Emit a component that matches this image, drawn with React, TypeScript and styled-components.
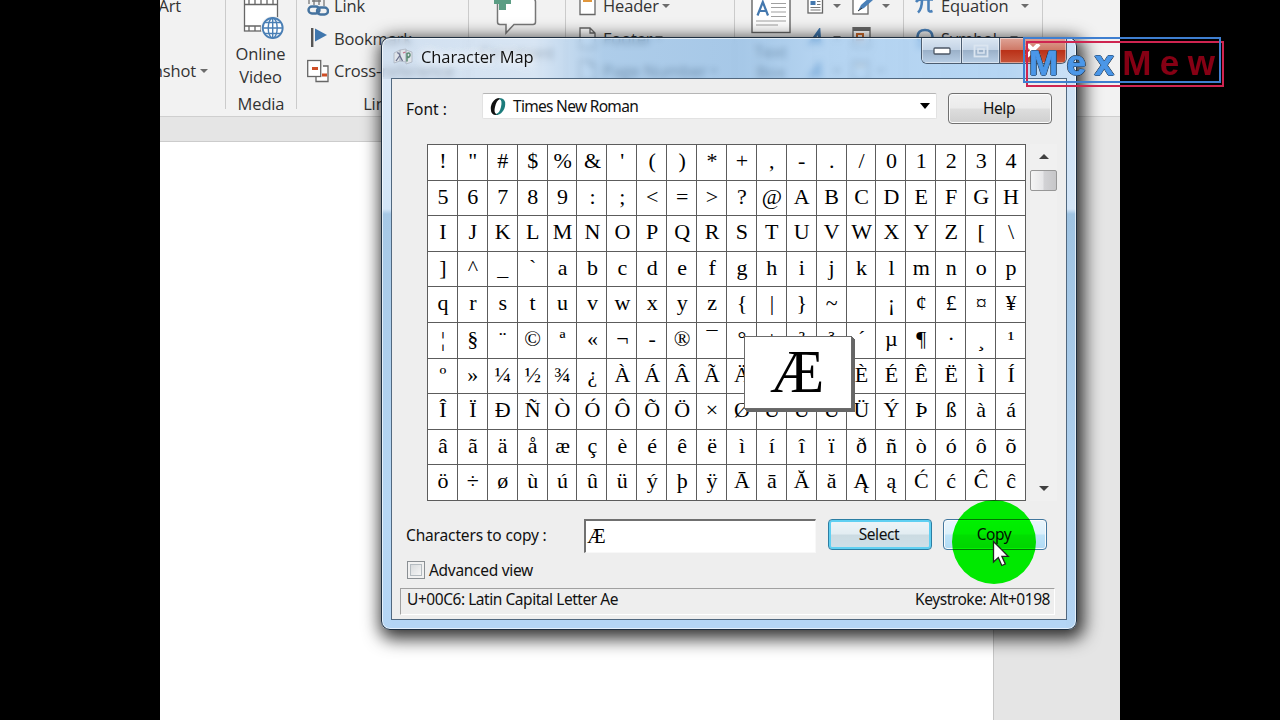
import React from 'react';
import styled, { createGlobalStyle } from 'styled-components';

const Global = createGlobalStyle`
  * { box-sizing: border-box; }
  body { margin: 0; background: #000; overflow: hidden; }
`;

const uiFont = '"Noto Sans", "Open Sans", sans-serif';

const Screen = styled.div`
  position: relative;
  width: 1280px;
  height: 720px;
  padding: 0 160px;
  background: #000;
  overflow: hidden;
`;

const Word = styled.div`
  display: flex;
  flex-direction: column;
  height: 720px;
  background: #e5e5e5;
  font-family: "Open Sans", "Noto Sans", sans-serif;
  font-size: 16.5px;
  letter-spacing: -0.15px;
  color: #333;
  overflow: hidden;
`;

const Ribbon = styled.div`
  display: flex;
  flex: none;
  height: 117px;
  background: #f2f2f2;
  border-bottom: 1px solid #cfcfcf;
`;

const Group = styled.div<{ $w: number }>`
  display: flex;
  flex: none;
  flex-direction: column;
  width: ${(p) => p.$w}px;
  height: 109px;
  border-right: 1px solid #cbcbcb;
`;

const GroupBody = styled.div`
  display: flex;
  height: 93px;
`;

const GroupName = styled.div`
  height: 16px;
  line-height: 22px;
  text-align: center;
  white-space: nowrap;
`;

const Rows = styled.div<{ $pad?: number; $end?: boolean }>`
  display: flex;
  flex-direction: column;
  margin-top: -10.5px;
  padding-left: ${(p) => p.$pad ?? 0}px;
  ${(p) => (p.$end ? 'align-items: flex-end; width: 48px; flex: none;' : '')}
`;

const Row = styled.div<{ $gap?: number; $endPad?: number }>`
  display: flex;
  flex: none;
  align-items: center;
  gap: ${(p) => p.$gap ?? 5}px;
  height: 32.5px;
  padding-right: ${(p) => p.$endPad ?? 0}px;
  white-space: nowrap;
  svg { flex: none; display: block; }
`;

const BigButton = styled.div<{ $w: number; $line?: number }>`
  display: flex;
  flex: none;
  flex-direction: column;
  align-items: center;
  width: ${(p) => p.$w}px;
  line-height: ${(p) => p.$line ?? 23}px;
  svg { flex: none; display: block; margin-bottom: -1px; }
`;

const Caret = styled.span<{ $ml?: number }>`
  width: 0;
  height: 0;
  margin-left: ${(p) => p.$ml ?? 0}px;
  border: 4px solid transparent;
  border-top-color: #6c6c6c;
  border-bottom-width: 0;
`;

const Paper = styled.div`
  flex: none;
  width: 834px;
  height: 579px;
  margin-top: 24px;
  background: #fff;
  border-top: 1px solid #cccccc;
  border-right: 1px solid #c6c6c6;
`;

const Window = styled.div`
  position: absolute;
  left: 381px;
  top: 37px;
  display: flex;
  flex-direction: column;
  width: 696px;
  height: 593px;
  padding: 0 9px 9px;
  border: 1px solid #1f2f40;
  border-radius: 9px;
  background:
    linear-gradient(180deg, #dbe8f6 0, #d3e5f7 130px, #a6c8e6 135px, #b7d7f4 430px, #b4d5f5 100%) left 41px / 10px 100% no-repeat,
    linear-gradient(180deg, #cfe2f5 0, #d3e5f7 130px, #9fc3e2 135px, #b0d1ef 430px, #b4d5f5 100%) right 41px / 10px 100% no-repeat,
    linear-gradient(90deg, #b4d5f5 0, #b4d5f5 100%) left bottom / 100% 10px no-repeat,
    linear-gradient(90deg, rgba(196,216,238,.72) 0, rgba(204,223,243,.72) 22%, rgba(145,189,230,.7) 32%, rgba(134,182,227,.7) 52%, rgba(156,199,239,.72) 63%, rgba(162,204,243,.76) 90%, rgba(200,223,246,.9) 100%);
  backdrop-filter: blur(3px);
  box-shadow: inset 0 0 0 1px rgba(255,255,255,.65), 3px 5px 17px 4px rgba(0,0,0,.8);
`;

const TitleBar = styled.div`
  display: flex;
  flex: none;
  align-items: flex-start;
  height: 40px;
  padding-left: 2px;
`;

const TitleIcon = styled.div`
  margin: 10px 8px 0 0;
  svg { display: block; }
`;

const Title = styled.div`
  flex: 1;
  margin-top: 7px;
  font: 16.5px/24px "Open Sans", "Noto Sans", sans-serif;
  letter-spacing: -0.1px;
  color: #111;
  text-shadow: 0 0 8px #fff, 0 0 8px #fff;
`;

const Controls = styled.div`
  display: flex;
  width: 146px;
  height: 26px;
  border: 1px solid #4b5c70;
  border-top: 0;
  border-radius: 0 0 6px 6px;
  overflow: hidden;
`;

const Control = styled.div<{ $w: number; $close?: boolean }>`
  display: flex;
  flex: none;
  justify-content: center;
  align-items: center;
  width: ${(p) => p.$w}px;
  border-right: ${(p) => (p.$close ? '0' : '1px solid #4b5c70')};
  box-shadow: inset 0 0 0 1px rgba(255,255,255,.45);
  background: ${(p) =>
    p.$close
      ? 'linear-gradient(180deg, #dfa497 0, #cf7a68 46%, #ba3118 50%, #c7553a 100%)'
      : 'linear-gradient(180deg, #dbe6f2 0, #c4d4e6 46%, #9bb1c9 50%, #b8cee5 100%)'};
`;

const Client = styled.div`
  display: flex;
  flex: none;
  flex-direction: column;
  width: 676px;
  height: 542px;
  padding: 14px 0 0 14px;
  border: 1px solid #51687f;
  background: #eeeeee;
  font-family: ${uiFont};
  font-size: 15.5px;
  letter-spacing: -0.4px;
  color: #111;
`;

const FontRow = styled.div`
  display: flex;
  height: 51px;
`;

const FieldLabel = styled.div<{ $w: number; $ls?: number }>`
  flex: none;
  width: ${(p) => p.$w}px;
  line-height: 32px;
  letter-spacing: ${(p) => p.$ls ?? 0}px;
  white-space: nowrap;
`;

const Combo = styled.div`
  display: flex;
  align-items: center;
  width: 455px;
  height: 26px;
  margin-right: 11px;
  padding: 0 6px 0 7px;
  background: #fff;
  border: 1px solid #e2e2e2;
  border-top-color: #b5b5b5;
  border-radius: 2px;
`;

const ComboText = styled.div`
  flex: 1;
  margin-left: 7px;
  letter-spacing: -0.7px;
`;

const DropArrow = styled.span`
  border: 5.5px solid transparent;
  border-top: 6px solid #000;
  border-bottom-width: 0;
`;

const Button = styled.div<{ $kind?: 'default' | 'hover' }>`
  display: flex;
  flex: none;
  justify-content: center;
  align-items: center;
  width: 104px;
  height: 31px;
  padding: 0 2px 1px 0;
  border-radius: 4px;
  border: 1px solid ${(p) => (p.$kind === 'default' ? '#2c7ea3' : p.$kind === 'hover' ? '#42779e' : '#707070')};
  box-shadow: inset 0 0 0 ${(p) => (p.$kind === 'default' ? '2px #5fd0f2' : '1px #fbfbfb')};
  background: ${(p) =>
    p.$kind === 'default'
      ? 'linear-gradient(180deg, #eef5f8 0, #e2edf2 48%, #cbdbe2 52%, #cfe0e8 100%)'
      : p.$kind === 'hover'
      ? 'linear-gradient(180deg, #e9f5fc 0, #dcf0fb 48%, #bee3f8 52%, #b0daf4 100%)'
      : 'linear-gradient(180deg, #f2f2f2 0, #ebebeb 48%, #dddddd 52%, #cfcfcf 100%)'};
`;

const GridRow = styled.div`
  display: flex;
  flex: none;
  height: 375px;
  padding-left: 21px;
`;

const CharGrid = styled.div`
  display: grid;
  flex: none;
  grid-template-columns: repeat(20, 1fr);
  grid-template-rows: repeat(10, 1fr);
  width: 599px;
  height: 357px;
  border-left: 1px solid #5c5c5c;
  border-top: 1px solid #5c5c5c;
  background: #fff;
  font: 22px/32px "Liberation Serif", serif;
  letter-spacing: 0;
  color: #000;
`;

const Cell = styled.div`
  display: flex;
  justify-content: center;
  min-width: 0;
  min-height: 0;
  padding-left: 1px;
  border-right: 1px solid #5c5c5c;
  border-bottom: 1px solid #5c5c5c;
`;

const Scroll = styled.div`
  display: flex;
  flex-direction: column;
  align-items: center;
  width: 27px;
  height: 357px;
  margin-left: 4px;
  padding: 10px 0 10px;
  background: #f0f0f0;
`;

const ScrollArrow = styled.span<{ $down?: boolean }>`
  border: 5px solid transparent;
  ${(p) =>
    p.$down
      ? 'border-top-color: #404040; border-bottom-width: 0; margin-top: auto;'
      : 'border-bottom-color: #404040; border-top-width: 0;'}
`;

const Thumb = styled.div`
  width: 27px;
  height: 21px;
  margin-top: 11px;
  border: 1px solid #979797;
  border-radius: 2px;
  background: linear-gradient(90deg, #f5f5f5 0, #e6e6e8 48%, #d2d2d5 52%, #c6c6c8 100%);
`;

const CopyRow = styled.div`
  display: flex;
  flex: none;
  height: 42px;
`;

const ButtonPair = styled.div`
  display: flex;
  gap: 11px;
`;

const CopyField = styled.div`
  flex: none;
  width: 232px;
  height: 34px;
  margin-right: 12px;
  padding-left: 1px;
  border: 2px solid #707070;
  border-right: 1px solid #f8f8f8;
  border-bottom: 1px solid #f8f8f8;
  background: #fff;
  font: 21px/30px "Liberation Serif", serif;
  color: #000;
`;

const CheckRow = styled.div`
  display: flex;
  flex: none;
  align-items: center;
  gap: 4px;
  height: 18px;
  margin-bottom: 9px;
  letter-spacing: -0.3px;
`;

const CheckBox = styled.div`
  width: 18px;
  height: 18px;
  margin-left: 1px;
  border: 1px solid #8a8f93;
  box-shadow: inset 0 0 0 2px #f1f1f1, inset 0 0 0 3px #b4bbc0;
  background: linear-gradient(135deg, #cfd3d6, #f5f5f5 80%);
`;

const StatusBar = styled.div`
  display: flex;
  flex: none;
  justify-content: space-between;
  width: 655px;
  height: 27px;
  margin-left: -6px;
  padding: 0 4px 0 6px;
  border: 1px solid #a0a0a0;
  border-right-color: #fff;
  border-bottom-color: #fff;
  line-height: 21px;
  letter-spacing: -0.45px;
  white-space: nowrap;
`;

const Preview = styled.div`
  position: absolute;
  left: 744px;
  top: 336px;
  width: 108px;
  height: 73px;
  border: 1px solid #6b6b6b;
  background: #fff;
  box-shadow: 1px 1px 0 #666, 2px 2px 0 #666, 3px 3px 0 #666;
  font: 61px/69px "Liberation Serif", serif;
  color: #000;
  text-align: center;
  text-indent: -2px;
`;

const ClickHalo = styled.div`
  position: absolute;
  left: 952px;
  top: 500px;
  width: 84px;
  height: 84px;
  border-radius: 50%;
  background: #00fa00;
  mix-blend-mode: multiply;
`;

const Pointer = styled.svg`
  position: absolute;
  left: 992px;
  top: 540px;
`;

const MarkFrame = styled.div<{ $x: number; $y: number; $c: string }>`
  position: absolute;
  left: ${(p) => p.$x}px;
  top: ${(p) => p.$y}px;
  width: 198px;
  height: 46px;
  border: 2px solid ${(p) => p.$c};
`;

const Mark = styled.div`
  position: absolute;
  left: 1029px;
  top: 42px;
  font: bold 35px/42px "Liberation Sans", sans-serif;
  letter-spacing: 8.4px;
  white-space: nowrap;
`;

const MarkBlue = styled.span`
  color: #4b97e8;
  -webkit-text-stroke: 0.8px #4b97e8;
  text-shadow: 1px 0 #22303f, -1px 0 #22303f, 0 1px #22303f, 0 -1px #22303f;
`;

const MarkRed = styled.span`
  color: #860014;
`;

const Film = () => (
  <svg width="72" height="43" viewBox="225 0 72 43" fill="none">
    <rect x="244.500" y="-4" width="33" height="35" fill="#fff" stroke="#666" strokeWidth="1.3" />
    <path d="M244.500 4.500h33M244.500 26h33M249 0v4M255 0v4M261 0v4M267 0v4M273 0v4M249 26v5M255 26v5M261 26v5" stroke="#666" strokeWidth="1.3" />
    <circle cx="272.700" cy="28" r="12" fill="#f2f2f2" />
    <circle cx="272.700" cy="28" r="10" fill="#fff" stroke="#4a7fb5" strokeWidth="1.8" />
    <ellipse cx="272.700" cy="28" rx="4.500" ry="10" stroke="#4a7fb5" strokeWidth="1.4" />
    <path d="M262.700 28h20M272.700 18v20M264.500 22.500h16.400M264.500 33.500h16.400" stroke="#4a7fb5" strokeWidth="1.4" />
  </svg>
);

const LinkIcon = () => (
  <svg width="22" height="24" viewBox="0 0 22 24" fill="none">
    <path d="M2 4v6M17 4v8M5 7h9M7 4v7M12 4v7" stroke="#777" strokeWidth="1.3" />
    <rect x="1.500" y="12.500" width="11" height="7" rx="3.500" stroke="#45739f" strokeWidth="2.400" />
    <rect x="10" y="13.500" width="11" height="7" rx="3.500" stroke="#45739f" strokeWidth="2.400" />
  </svg>
);

const Flag = () => (
  <svg width="22" height="22" viewBox="0 0 22 22">
    <rect x="4" y="1" width="2.400" height="19" fill="#555" />
    <path d="M8 1.500L20 8L8 14.500z" fill="#3f76ad" />
  </svg>
);

const CrossRef = () => (
  <svg width="22" height="24" viewBox="0 0 22 24" fill="none">
    <path d="M9 16v6.500h12V7h-5" fill="#fff" stroke="#666" strokeWidth="1.300" />
    <rect x=".7" y="1.500" width="13" height="16" fill="#fff" stroke="#666" strokeWidth="1.300" />
    <path d="M5 9.500h6M15 16h5" stroke="#cf4f27" strokeWidth="3" />
  </svg>
);

const Bubble = () => (
  <svg width="97" height="42" viewBox="469 0 97 42" fill="none">
    <path d="M497.500 -5V22q0 2.500 2.500 2.500h6v8.500l8-8.500h19q2.500 0 2.500-2.500V2q0-3-2.500-3z" fill="#fff" stroke="#777" strokeWidth="1.500" />
    <path d="M494 0h17v4h-5v6h-7V4h-5z" fill="#5b9d84" />
  </svg>
);

const PageIcon = ({ fold }: { fold?: boolean }) => (
  <svg width="17" height="22" viewBox="0 0 17 22" fill="none">
    <path d={fold ? 'M1 1h10l5 5v15H1zM11 1v5h5' : 'M1 1h15v18.500H1z'} fill="#fff" stroke="#666" strokeWidth="1.300" />
    {!fold && <path d="M4 6h9" stroke="#e0963c" strokeWidth="2" />}
  </svg>
);

const TextBoxIcon = () => (
  <svg width="72" height="43" viewBox="735 0 72 43" fill="none">
    <rect x="752" y="-4" width="38" height="36.500" fill="#fff" stroke="#666" strokeWidth="1.400" />
    <path d="M757.500 15.500L762.800 2L768 15.500M759.500 11h6.800" stroke="#4478ae" strokeWidth="2.200" />
    <path d="M771 3.500h15M771 7.500h15M771 12h15M771 16.500h15M756 21h30M756 25h22" stroke="#a0a0a0" strokeWidth="1.200" />
  </svg>
);

const QuickParts = () => (
  <svg width="17" height="20" viewBox="0 0 17 20" fill="none">
    <rect x="1" y="0" width="14.500" height="17" fill="#fff" stroke="#666" strokeWidth="1.300" />
    <rect x="3.500" y="5" width="5" height="4" fill="#4478ae" />
    <path d="M10 5.500h3.500M10 8.500h3.500M3.500 11.500h10M3.500 14h10" stroke="#777" />
  </svg>
);

const WordArt = () => (
  <svg width="17" height="20" viewBox="0 0 17 20" fill="none">
    <path d="M2 17L12 3L13 17M5 13h8" stroke="#3f76ad" strokeWidth="3" />
  </svg>
);

const Signature = () => (
  <svg width="22" height="22" viewBox="0 0 22 22" fill="none">
    <rect x="1" y="2" width="15" height="17" fill="#fff" stroke="#666" strokeWidth="1.300" />
    <path d="M6 16L9 10L18 2L21 5L12 13z" fill="#4a80b8" />
    <path d="M6 16l4-3" stroke="#333" />
  </svg>
);

const DateIcon = () => (
  <svg width="22" height="22" viewBox="0 0 22 22" fill="none">
    <rect x="1" y="0" width="17" height="20" fill="#fff" stroke="#666" strokeWidth="1.300" />
    <rect x="1" y="0" width="17" height="4" fill="#666" />
    <rect x="5" y="7" width="6" height="6" stroke="#cf6a2c" strokeWidth="2" />
  </svg>
);

const Pi = () => (
  <svg width="20" height="20" viewBox="0 0 20 20" fill="none">
    <path d="M1 6Q3 3.500 6 3.500H18M7 3.500Q7 13 3 16.500M13.500 3.500V13.500Q13.500 16.500 17.500 15" stroke="#4a80b8" strokeWidth="2.600" />
  </svg>
);

const Omega = () => (
  <svg width="20" height="22" viewBox="0 0 20 22" fill="none">
    <path d="M2 19.500H7.500V17Q2.500 14 2.500 9.500Q3 3 10 3T17.500 9.500Q17.500 14 12.500 17V19.500H18" stroke="#4a80b8" strokeWidth="2.600" />
  </svg>
);

const MapIcon = () => (
  <svg width="20" height="18" viewBox="0 0 20 18" fill="none">
    <path d="M1 5L7 2V13L1 15zM13 2L19 4V14L13 16zM7 2L13 1V14L7 13z" fill="#dfe4ea" stroke="#a9b3bf" strokeWidth=".8" />
    <path d="M4 5Q6 4 7 8L9.500 13M6.500 8L3 13" stroke="#6a6f8c" strokeWidth="1.300" />
    <path d="M10 5l2.500-1" stroke="#c2708a" strokeWidth="1.300" />
    <path d="M14 5V13.500M14 5.500Q17.500 4 17 7.500Q16.500 9.500 14 9.500" stroke="#5a8a72" strokeWidth="1.500" />
  </svg>
);

const OpenType = () => (
  <svg width="16" height="19" viewBox="0 0 16 19">
    <path fillRule="evenodd" d="M9.500 1C4 1 .5 7 .8 12Q1 18 6 18Q9 18 8 17C4.500 17.500 4 14 5 10Q6.500 3 10 2z" fill="#111" />
    <path d="M9.500 1Q15.500 1 15.200 7.500C15 13 11 18 6 18L6.500 16.700Q9.500 16 11 10Q12.500 3 9.500 2.200z" fill="#1c7c7c" />
  </svg>
);

const glyphRows = [
  '!"#$%&\'()*+,-./01234',
  '56789:;<=>?@ABCDEFGH',
  'IJKLMNOPQRSTUVWXYZ[\\',
  ']^_`abcdefghijklmnop',
  'qrstuvwxyz{|}~\u00a0¡¢£¤¥',
  '¦§¨©ª«¬-®¯°±²³´µ¶·¸¹',
  'º»¼½¾¿ÀÁÂÃÄÅÆÇÈÉÊËÌÍ',
  'ÎÏÐÑÒÓÔÕÖ×ØÙÚÛÜÝÞßàá',
  'âãäåæçèéêëìíîïðñòóôõ',
  'ö÷øùúûüýþÿĀāĂăĄąĆćĈĉ',
];

export default function App() {
  return (
    <Screen>
      <Global />
      <Word>
        <Ribbon>
          <Group $w={66}>
            <GroupBody>
              <Rows $end>
                <Row $endPad={27}>SmartArt</Row>
                <Row />
                <Row $gap={4}>Screenshot<Caret /></Row>
              </Rows>
            </GroupBody>
          </Group>
          <Group $w={71}>
            <GroupBody>
              <BigButton $w={69}>
                <Film />
                <span>Online</span>
                <span>Video</span>
              </BigButton>
            </GroupBody>
            <GroupName>Media</GroupName>
          </Group>
          <Group $w={172}>
            <GroupBody>
              <Rows $pad={10}>
                <Row><LinkIcon />Link</Row>
                <Row><Flag />Bookmark</Row>
                <Row><CrossRef />Cross-reference</Row>
              </Rows>
            </GroupBody>
            <GroupName>Links</GroupName>
          </Group>
          <Group $w={97}>
            <GroupBody>
              <BigButton $w={96}>
                <Bubble />
                <span>Comment</span>
              </BigButton>
            </GroupBody>
          </Group>
          <Group $w={169}>
            <GroupBody>
              <Rows $pad={13}>
                <Row $gap={7}><PageIcon />Header<Caret $ml={-4} /></Row>
                <Row $gap={7}><PageIcon fold />Footer<Caret $ml={-4} /></Row>
                <Row $gap={7}><PageIcon fold />Page Number<Caret $ml={-4} /></Row>
              </Rows>
            </GroupBody>
          </Group>
          <Group $w={169}>
            <GroupBody>
              <BigButton $w={72} $line={20}>
                <TextBoxIcon />
                <span>Text</span>
                <span>Box</span>
              </BigButton>
              <Rows>
                <Row $gap={9}><QuickParts /><Caret /></Row>
                <Row $gap={9}><WordArt /><Caret /></Row>
                <Row $gap={9}><WordArt /><Caret /></Row>
              </Rows>
              <Rows $pad={11}>
                <Row $gap={8}><Signature /><Caret /></Row>
                <Row $gap={8}><DateIcon /></Row>
                <Row $gap={8}><PageIcon /><Caret /></Row>
              </Rows>
            </GroupBody>
          </Group>
          <Group $w={139}>
            <GroupBody>
              <Rows $pad={11}>
                <Row $gap={6}><Pi />Equation<Caret $ml={7} /></Row>
                <Row $gap={6}><Omega />Symbol<Caret $ml={7} /></Row>
              </Rows>
            </GroupBody>
          </Group>
        </Ribbon>
        <Paper />
      </Word>

      <Window>
        <TitleBar>
          <TitleIcon><MapIcon /></TitleIcon>
          <Title>Character Map</Title>
          <Controls>
            <Control $w={40}>
              <svg width="18" height="8" viewBox="0 0 18 8"><rect x="1" y="1" width="16" height="6" rx="1" fill="#fff" stroke="#4c5765" strokeWidth="1.300" /></svg>
            </Control>
            <Control $w={38}>
              <svg width="16" height="14" viewBox="0 0 16 14" fill="none"><rect x="1.500" y="1.500" width="13" height="11" stroke="#dbe5f0" strokeWidth="1.800" /><rect x="5" y="5" width="6" height="4" stroke="#dbe5f0" strokeWidth="1.500" /></svg>
            </Control>
            <Control $w={66} $close>
              <svg width="16" height="14" viewBox="0 0 16 14"><path d="M2 0L14 12M14 0L2 12" stroke="#fff" strokeWidth="4" /></svg>
            </Control>
          </Controls>
        </TitleBar>
        <Client>
          <FontRow>
            <FieldLabel $w={76}>Font :</FieldLabel>
            <Combo>
              <OpenType />
              <ComboText>Times New Roman</ComboText>
              <DropArrow />
            </Combo>
            <Button>Help</Button>
          </FontRow>
          <GridRow>
            <CharGrid>
              {glyphRows.flatMap((row, r) =>
                Array.from(row).map((ch, c) => <Cell key={`${r}-${c}`}>{ch}</Cell>)
              )}
            </CharGrid>
            <Scroll>
              <ScrollArrow />
              <Thumb />
              <ScrollArrow $down />
            </Scroll>
          </GridRow>
          <CopyRow>
            <FieldLabel $w={178} $ls={-0.15}>Characters to copy :</FieldLabel>
            <CopyField>Æ</CopyField>
            <ButtonPair>
              <Button $kind="default">Select</Button>
              <Button $kind="hover">Copy</Button>
            </ButtonPair>
          </CopyRow>
          <CheckRow>
            <CheckBox />
            Advanced view
          </CheckRow>
          <StatusBar>
            <span>U+00C6: Latin Capital Letter Ae</span>
            <span>Keystroke: Alt+0198</span>
          </StatusBar>
        </Client>
      </Window>

      <Preview>Æ</Preview>
      <ClickHalo />
      <Pointer width="18" height="28" viewBox="0 0 18 28">
        <path d="M1.500 1.500V22L6.300 17.600L9.800 25.500L13.300 24L9.900 16.300H16.200z" fill="#fff" stroke="#222" strokeWidth="1.300" />
      </Pointer>
      <Mark>
        <MarkBlue>Mex</MarkBlue>
        <MarkRed>Mew</MarkRed>
      </Mark>
      <MarkFrame $x={1026} $y={41} $c="#cf2450" />
      <MarkFrame $x={1023} $y={37} $c="#3f7fd0" />
    </Screen>
  );
}
